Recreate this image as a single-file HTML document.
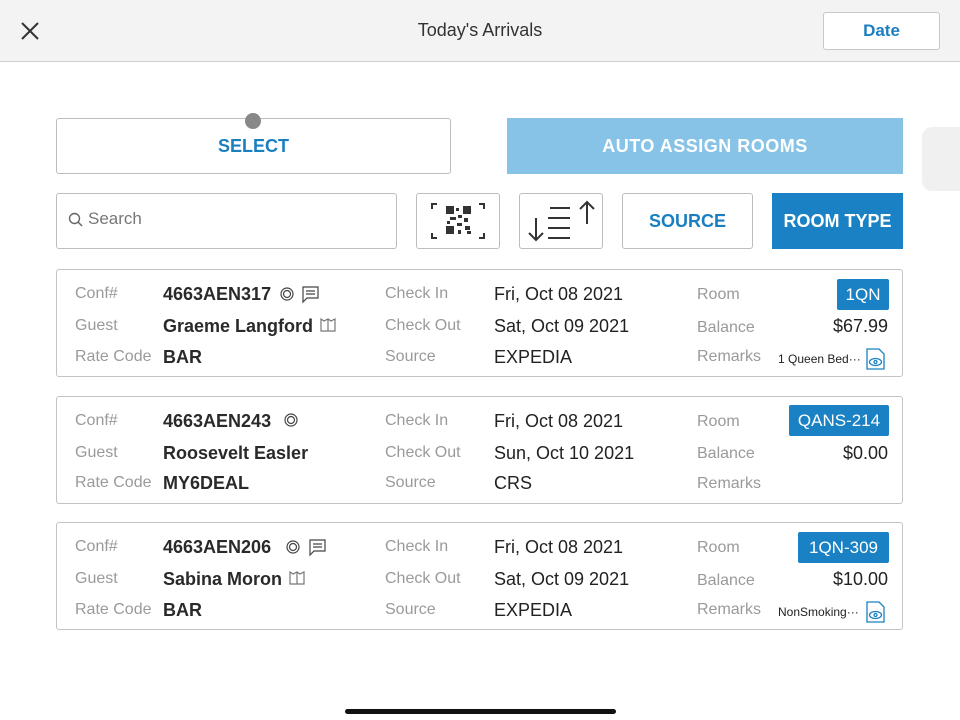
<!DOCTYPE html>
<html><head><meta charset="utf-8"><style>
*{box-sizing:border-box;margin:0;padding:0}
body{width:960px;height:720px;background:#fff;font-family:"Liberation Sans",sans-serif;position:relative;overflow:hidden;color:#222}
.abs{position:absolute}
.hdr{left:0;top:0;width:960px;height:62px;background:#f3f3f3;border-bottom:1px solid #cfcfcf}
.title{left:0;width:960px;top:20px;text-align:center;font-size:18px;color:#333}
.date{left:823px;top:12px;width:117px;height:38px;background:#fff;border:1px solid #c8c8c8;border-radius:3px;color:#1a7fc1;font-size:17px;font-weight:bold;text-align:center;line-height:36px}
.btn{border:1px solid #bdbdbd;border-radius:3px;background:#fff;text-align:center}
.card{left:56px;width:847px;height:108px;border:1px solid #c4c4c4;border-radius:3px}
.l{font-size:16px;color:#9a9a9a}
.v{font-size:18px;color:#222}
.b{font-weight:bold;color:#2a2a2a}
.tag{background:#1a82c4;color:#fff;font-size:17px;text-align:center;height:31px;line-height:31px;border-radius:2px}
</style></head><body>
<div class="abs hdr"></div>
<svg class="abs" style="left:20px;top:21px" width="20" height="20"><path d="M2 2L18 18M18 2L2 18" stroke="#333" stroke-width="2"/></svg>
<div class="abs title">Today's Arrivals</div>
<div class="abs date">Date</div>

<div class="abs btn" style="left:56px;top:118px;width:395px;height:56px;line-height:54px;color:#1a7fc1;font-weight:bold;font-size:18px">SELECT</div>
<div class="abs" style="left:245px;top:113px;width:16px;height:16px;border-radius:50%;background:#888"></div>
<div class="abs" style="left:507px;top:118px;width:396px;height:56px;background:#87c3e6;color:#fff;font-size:18px;font-weight:bold;text-align:center;line-height:56px;letter-spacing:.5px">AUTO ASSIGN ROOMS</div>
<div class="abs" style="left:922px;top:127px;width:50px;height:64px;background:#f0f0f0;border-radius:10px"></div>

<div class="abs btn" style="left:56px;top:193px;width:341px;height:56px;text-align:left"></div>
<svg class="abs" style="left:68px;top:212px" width="16" height="16"><circle cx="6.5" cy="6.5" r="5" fill="none" stroke="#666" stroke-width="1.4"/><path d="M10 10L14 14" stroke="#666" stroke-width="1.5"/></svg>
<div class="abs" style="left:88px;top:209px;font-size:17px;color:#777">Search</div>

<div class="abs btn" style="left:416px;top:193px;width:84px;height:56px"></div>
<svg class="abs" style="left:430px;top:201px" width="56" height="40"><path d="M2 8V3H7M49 3H54V8M2 32V37H7M49 37H54V32" fill="none" stroke="#333" stroke-width="2"/>
<g fill="#333"><rect x="16" y="5" width="8" height="8"/><rect x="33" y="5" width="8" height="8"/><rect x="16" y="25" width="8" height="8"/><rect x="26" y="7" width="3" height="3"/><rect x="28" y="14" width="4" height="3"/><rect x="20" y="16" width="6" height="3"/><rect x="34" y="17" width="4" height="4"/><rect x="27" y="22" width="5" height="3"/><rect x="35" y="25" width="5" height="4"/><rect x="28" y="29" width="3" height="4"/><rect x="17" y="20" width="3" height="3"/><rect x="37" y="30" width="4" height="3"/></g></svg>

<div class="abs btn" style="left:519px;top:193px;width:84px;height:56px"></div>
<svg class="abs" style="left:524px;top:198px" width="76" height="46"><g stroke="#333" stroke-width="2" fill="none"><path d="M12 20V42M5 35L12 42L19 35"/><path d="M24 20H46M24 30H46M24 40H46M26 10H46"/><path d="M63 26V4M56 11L63 4L70 11"/></g></svg>

<div class="abs btn" style="left:622px;top:193px;width:131px;height:56px;line-height:54px;color:#1a7fc1;font-weight:bold;font-size:18px">SOURCE</div>
<div class="abs" style="left:772px;top:193px;width:131px;height:56px;background:#1a82c4;color:#fff;font-weight:bold;font-size:18px;text-align:center;line-height:56px">ROOM TYPE</div>

<!-- card template positions -->
<div class="abs card" style="top:269px"></div>
<div class="abs card" style="top:396px"></div>
<div class="abs card" style="top:522px"></div>

<!-- card 1 -->
<div class="abs l" style="left:75px;top:285px">Conf#</div>
<div class="abs l" style="left:75px;top:317px">Guest</div>
<div class="abs l" style="left:75px;top:348px">Rate Code</div>
<div class="abs v b" style="left:163px;top:284px">4663AEN317</div>
<div class="abs v b" style="left:163px;top:316px">Graeme Langford</div>
<div class="abs v b" style="left:163px;top:347px">BAR</div>
<div class="abs l" style="left:385px;top:285px">Check In</div>
<div class="abs l" style="left:385px;top:317px">Check Out</div>
<div class="abs l" style="left:385px;top:348px">Source</div>
<div class="abs v" style="left:494px;top:284px">Fri, Oct 08 2021</div>
<div class="abs v" style="left:494px;top:316px">Sat, Oct 09 2021</div>
<div class="abs v" style="left:494px;top:347px">EXPEDIA</div>
<div class="abs l" style="left:697px;top:286px">Room</div>
<div class="abs l" style="left:697px;top:319px">Balance</div>
<div class="abs l" style="left:697px;top:348px">Remarks</div>
<div class="abs tag" style="left:837px;top:279px;width:52px">1QN</div>
<div class="abs v" style="right:72px;top:316px">$67.99</div>
<div class="abs" style="left:778px;top:352px;font-size:12px">1 Queen Bed···</div>

<!-- card 2 -->
<div class="abs l" style="left:75px;top:412px">Conf#</div>
<div class="abs l" style="left:75px;top:444px">Guest</div>
<div class="abs l" style="left:75px;top:474px">Rate Code</div>
<div class="abs v b" style="left:163px;top:411px">4663AEN243</div>
<div class="abs v b" style="left:163px;top:443px">Roosevelt Easler</div>
<div class="abs v b" style="left:163px;top:473px">MY6DEAL</div>
<div class="abs l" style="left:385px;top:412px">Check In</div>
<div class="abs l" style="left:385px;top:444px">Check Out</div>
<div class="abs l" style="left:385px;top:474px">Source</div>
<div class="abs v" style="left:494px;top:411px">Fri, Oct 08 2021</div>
<div class="abs v" style="left:494px;top:443px">Sun, Oct 10 2021</div>
<div class="abs v" style="left:494px;top:473px">CRS</div>
<div class="abs l" style="left:697px;top:413px">Room</div>
<div class="abs l" style="left:697px;top:445px">Balance</div>
<div class="abs l" style="left:697px;top:475px">Remarks</div>
<div class="abs tag" style="left:789px;top:405px;width:100px">QANS-214</div>
<div class="abs v" style="right:72px;top:443px">$0.00</div>

<!-- card 3 -->
<div class="abs l" style="left:75px;top:538px">Conf#</div>
<div class="abs l" style="left:75px;top:570px">Guest</div>
<div class="abs l" style="left:75px;top:601px">Rate Code</div>
<div class="abs v b" style="left:163px;top:537px">4663AEN206</div>
<div class="abs v b" style="left:163px;top:569px">Sabina Moron</div>
<div class="abs v b" style="left:163px;top:600px">BAR</div>
<div class="abs l" style="left:385px;top:538px">Check In</div>
<div class="abs l" style="left:385px;top:570px">Check Out</div>
<div class="abs l" style="left:385px;top:601px">Source</div>
<div class="abs v" style="left:494px;top:537px">Fri, Oct 08 2021</div>
<div class="abs v" style="left:494px;top:569px">Sat, Oct 09 2021</div>
<div class="abs v" style="left:494px;top:600px">EXPEDIA</div>
<div class="abs l" style="left:697px;top:539px">Room</div>
<div class="abs l" style="left:697px;top:572px">Balance</div>
<div class="abs l" style="left:697px;top:601px">Remarks</div>
<div class="abs tag" style="left:798px;top:532px;width:91px">1QN-309</div>
<div class="abs v" style="right:72px;top:569px">$10.00</div>
<div class="abs" style="left:778px;top:605px;font-size:12px">NonSmoking···</div>

<!-- small icons -->
<svg class="abs" style="left:0;top:0" width="960" height="720">
<g fill="none" stroke="#444" stroke-width="1.2">
<circle cx="287" cy="294" r="6"/><circle cx="287" cy="294" r="3.5"/>
<path d="M303 287H318V298H307L303 302Z M306 291H315M306 294H315"/>
<path d="M321 319V331H335V319L331 321L328 319L324 321Z M328 319V331" stroke="#777"/>
<circle cx="291" cy="420" r="6"/><circle cx="291" cy="420" r="3.5"/>
<circle cx="293" cy="547" r="6"/><circle cx="293" cy="547" r="3.5"/>
<path d="M310 540H325V551H314L310 555Z M313 544H322M313 547H322"/>
<path d="M290 572V584H304V572L300 574L297 572L293 574Z M297 572V584" stroke="#777"/>
</g>
<g fill="none" stroke="#1a82c4" stroke-width="1.3">
<path d="M867 349H879L884 354V369H867Z"/><ellipse cx="875.5" cy="362" rx="6" ry="3.5"/><circle cx="875.5" cy="362" r="1.5"/>
<path d="M867 602H879L884 607V622H867Z"/><ellipse cx="875.5" cy="615" rx="6" ry="3.5"/><circle cx="875.5" cy="615" r="1.5"/>
</g>
</svg>

<div class="abs" style="left:345px;top:709px;width:271px;height:5px;border-radius:3px;background:#111"></div>
</body></html>
